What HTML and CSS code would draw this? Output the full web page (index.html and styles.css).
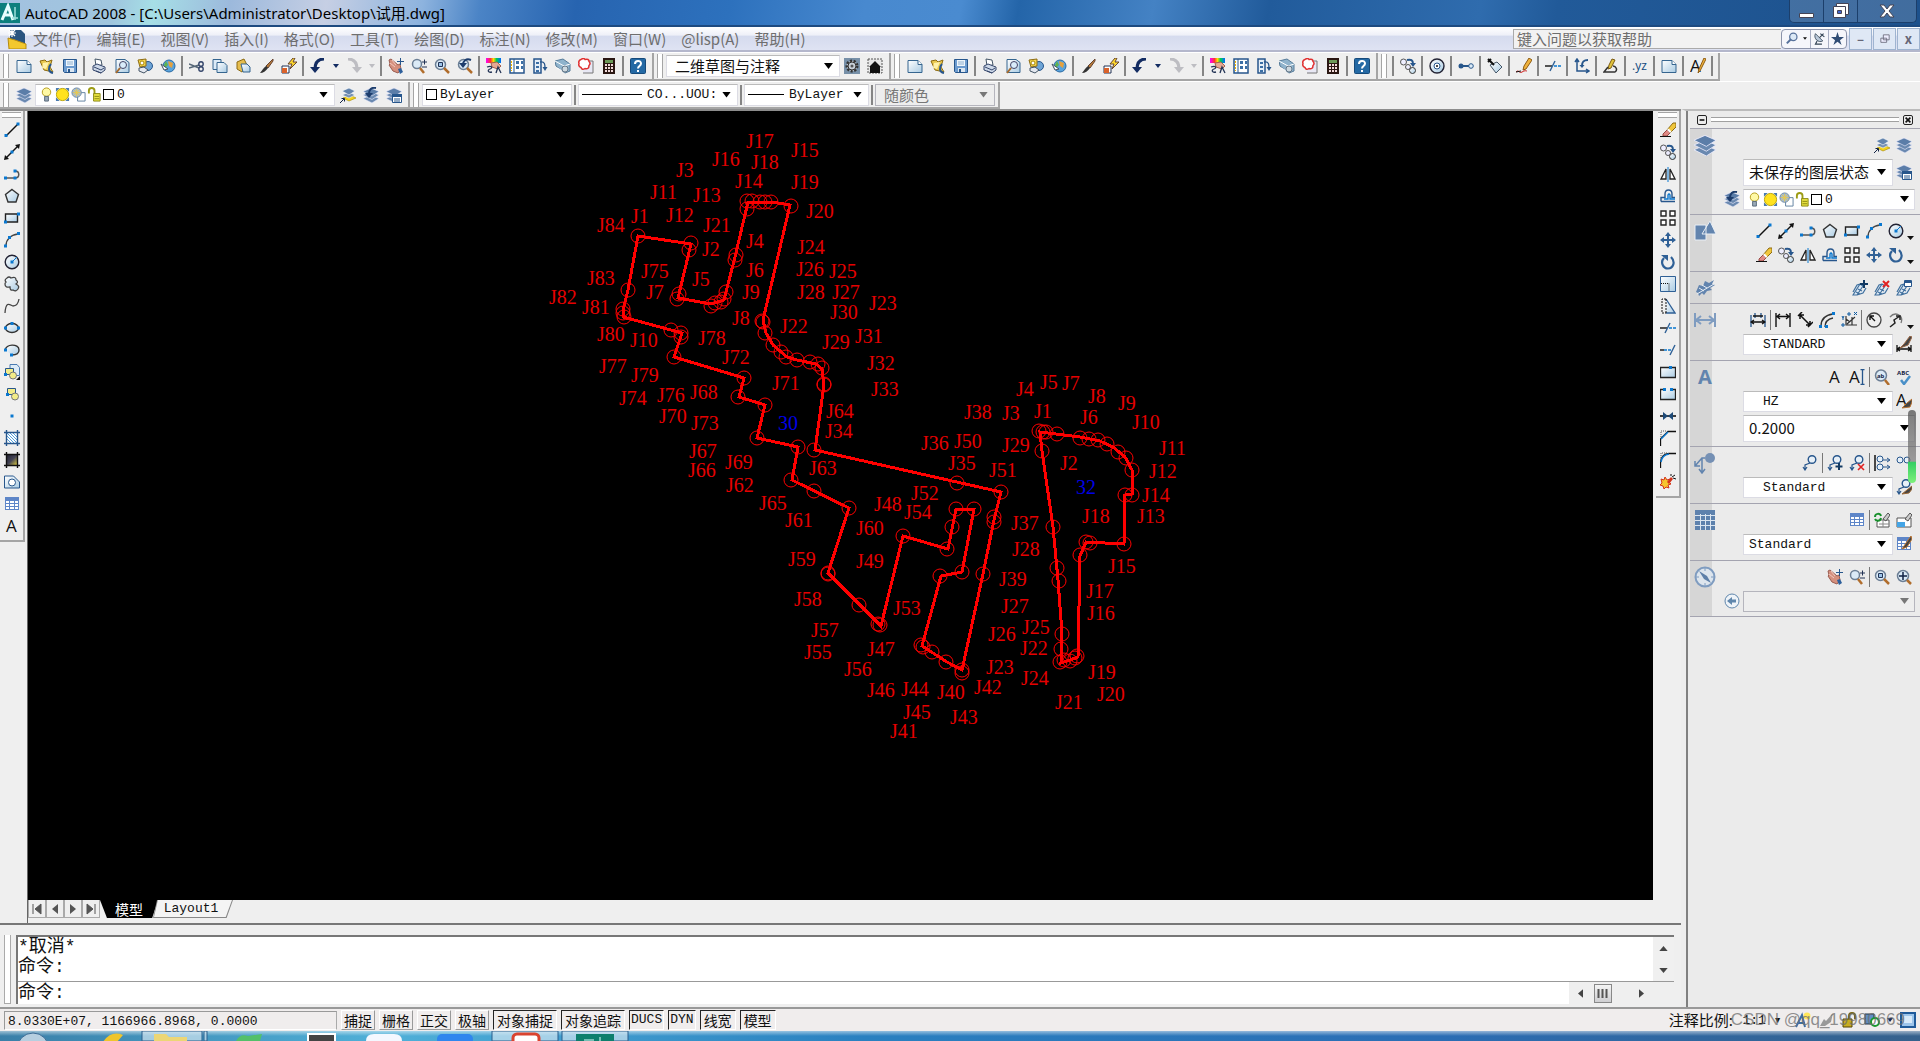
FILE: index.html
```html
<!DOCTYPE html>
<html lang="zh-CN">
<head>
<meta charset="utf-8">
<title>AutoCAD 2008</title>
<link rel="stylesheet" href="styles.css">
</head>
<body>
<svg class="sprite" aria-hidden="true">
<defs>
<linearGradient id="sheetFill" x1="0" y1="0" x2="1" y2="1"><stop offset="0" stop-color="#fff"/><stop offset="1" stop-color="#a9cbe3"/></linearGradient>
<linearGradient id="darkFill" x1="0" y1="0" x2="1" y2="1"><stop offset="0" stop-color="#223"/><stop offset=".5" stop-color="#445"/><stop offset="1" stop-color="#d8c840"/></linearGradient>
<linearGradient id="rainbow"><stop offset="0" stop-color="#f0f"/><stop offset=".3" stop-color="#f33"/><stop offset=".5" stop-color="#fd0"/><stop offset=".7" stop-color="#0c5"/><stop offset="1" stop-color="#06f"/></linearGradient>
</defs>
<symbol id="new" viewBox="0 0 16 16"><path d="M1 2.500h10l4 4v8H1z" fill="url(#sheetFill)" stroke="#35658f"/><path d="M11 2.500v4h4" fill="#fff" stroke="#35658f"/></symbol>
<symbol id="open" viewBox="0 0 16 16"><path d="M1 3l5-1 2 2 5-2-2 7 3 5-9-2z" fill="#e9c84e" stroke="#8d6b12"/><path d="M4 5l6-1-3 7-4-1z" fill="#fff1a8"/><path d="M14 15c-5-1-5-6-2-9" fill="none" stroke="#27568c" stroke-width="2"/></symbol>
<symbol id="save" viewBox="0 0 16 16"><path d="M1.500 1.500h13v13h-12l-1-1z" fill="#6c9bcf" stroke="#27568c"/><path d="M4 2h8v6H4z" fill="#eef5fb"/><path d="M5 10h7v4H5z" fill="#dbe6f1"/><path d="M6 11h2v3H6z" fill="#27568c"/><path d="M5 4h6M5 6h6" stroke="#8fb0d0"/></symbol>
<symbol id="print" viewBox="0 0 16 16"><path d="M4 1l6 1 1 5-6 1z" fill="#fff" stroke="#456"/><path d="M2 8l4-2 8 3v3l-4 3-8-3z" fill="#cdd8e8" stroke="#34456a"/><path d="M3 9l7 3 3-2M5 13l5 2" stroke="#34456a" fill="none"/></symbol>
<symbol id="preview" viewBox="0 0 16 16"><path d="M2 1.500h9l4 3v10H2z" fill="url(#sheetFill)" stroke="#35658f"/><circle cx="9" cy="7" r="3.500" fill="#d9ecfa" stroke="#446"/><path d="M6 10l-4 5" stroke="#a66a2c" stroke-width="2"/></symbol>
<symbol id="publish" viewBox="0 0 16 16"><circle cx="11" cy="8" r="4.500" fill="#6ea4d5" stroke="#27568c"/><path d="M1 2l8-1v7l-6 1z" fill="#f6d84f" stroke="#8d6b12"/><path d="M2 10l5-1 4 3-4 3-5-2z" fill="#e4e8f0" stroke="#456"/><circle cx="5" cy="5" r="2" fill="#fff" stroke="#a80"/></symbol>
<symbol id="web" viewBox="0 0 16 16"><circle cx="9" cy="8" r="6" fill="#59a3dc" stroke="#2b6ba5"/><path d="M8 3l5 2-1 5-3-2z" fill="#e5a13e"/><path d="M6 3l2 4-3 3-1-3z" fill="#5fb44e"/><path d="M1 6l7 5-4 1z" fill="#fff" stroke="#456"/></symbol>
<symbol id="cut" viewBox="0 0 16 16"><path d="M0 6l10 4M0 10l10-3" stroke="#567" stroke-width="1.500"/><circle cx="12" cy="6" r="2.200" fill="none" stroke="#34456a" stroke-width="1.400"/><circle cx="12" cy="11" r="2.200" fill="none" stroke="#34456a" stroke-width="1.400"/></symbol>
<symbol id="copy" viewBox="0 0 16 16"><path d="M1 1.500h8v10H1z" fill="#dcebf7" stroke="#35658f"/><path d="M5 4.500h7l3 3v7H5z" fill="url(#sheetFill)" stroke="#35658f"/></symbol>
<symbol id="paste" viewBox="0 0 16 16"><path d="M2 4l7-3 4 8-6 5-5-3z" fill="#e6bd4d" stroke="#8d6b12"/><path d="M6 6h6l3 3v5H8z" fill="url(#sheetFill)" stroke="#35658f"/></symbol>
<symbol id="brush" viewBox="0 0 16 16"><path d="M15 1L8 8l2 2 5-7z" fill="#b77b39" stroke="#643"/><path d="M8 8l2 2c-2 3-5 5-8 5 2-2 3-5 6-7z" fill="#333"/></symbol>
<symbol id="match" viewBox="0 0 16 16"><path d="M12 0L7 6h4l-2 5 7-7h-4l2-4z" fill="#ffd92e" stroke="#643"/><path d="M1 8h7v7H1z" fill="#fff" stroke="#235"/><path d="M1 10h5v5H1z" fill="#d9622b"/></symbol>
<symbol id="undo" viewBox="0 0 16 16"><path d="M14 1C7 1 5 5 5 11" fill="none" stroke="currentColor" stroke-width="3"/><path d="M0 9h10l-5 6z" fill="currentColor"/></symbol>
<symbol id="redo" viewBox="0 0 16 16"><path d="M2 1c7 0 9 4 9 10" fill="none" stroke="currentColor" stroke-width="3"/><path d="M6 9h10l-5 6z" fill="currentColor"/></symbol>
<symbol id="down" viewBox="0 0 6 4"><path d="M0 0h6L3 4z" fill="currentColor"/></symbol>
<symbol id="pan" viewBox="0 0 16 16"><path d="M1 2l2-1 7 6 2-1 1 5-3 4-5-2-4-6 1-1z" fill="#d5907e" stroke="#9a5c50"/><path d="M2 5l5 4M4 2l4 5" stroke="#f2c9be"/><path d="M10 11l3-1 2 4-3 2z" fill="#2d5f9b"/><path d="M12.500 0v7M9 3.500h7" stroke="#27568c"/></symbol>
<symbol id="zoomrt" viewBox="0 0 16 16"><circle cx="6" cy="6" r="4.500" fill="#dbeaf6" stroke="#6c7f95" stroke-width="1.500"/><path d="M9 10l4 5" stroke="#b06d2c" stroke-width="2.500"/><path d="M11 4h5M13.500 1.500v5M11 9h5" stroke="#235"/></symbol>
<symbol id="zoomwin" viewBox="0 0 16 16"><circle cx="6.500" cy="6.500" r="5" fill="#dbeaf6" stroke="#6c7f95" stroke-width="1.500"/><path d="M4.500 4.500h4v4h-4z" fill="#9bc3e8" stroke="#235"/><path d="M10 10l5 5" stroke="#b06d2c" stroke-width="2.500"/></symbol>
<symbol id="zoomprev" viewBox="0 0 16 16"><circle cx="6.500" cy="6.500" r="5" fill="#dbeaf6" stroke="#6c7f95" stroke-width="1.500"/><path d="M14 2C9 0 6 3 6 7" fill="none" stroke="#1d3d6d" stroke-width="2"/><path d="M2 5h8l-4 5z" fill="#1d3d6d"/><path d="M10 10l5 5" stroke="#b06d2c" stroke-width="2.500"/></symbol>
<symbol id="zoomall" viewBox="0 0 16 16"><circle cx="7" cy="7" r="5.500" fill="#dbeaf6" stroke="#6c7f95" stroke-width="1.500"/><path d="M7 3v8M3 7h8" stroke="#124" stroke-width="1.500"/><path d="M11 11l4 4" stroke="#b06d2c" stroke-width="2.500"/></symbol>
<symbol id="props" viewBox="0 0 16 16"><path d="M0 0h15v5H0z" fill="url(#rainbow)"/><path d="M5 5l6-1 4 4-3 3-6-2z" fill="#e8a994" stroke="#a06050"/><path d="M10 15l2-6 3 6M1 9c5-2 6 1 3 2s-2 4 2 3" fill="none" stroke="#235" stroke-width="1.300"/></symbol>
<symbol id="center" viewBox="0 0 16 16"><path d="M1 1h14v14H1z" fill="#fff" stroke="#27568c" stroke-width="1.500"/><path d="M5 1v14" stroke="#27568c"/><path d="M2.500 3v10" stroke="#f0b400" stroke-dasharray="2 1"/><path d="M7 3h3v3H7zM12 3h2v3h-2zM7 8h3v3H7zM12 8h2v3h-2z" fill="#3b6ea5"/></symbol>
<symbol id="palette" viewBox="0 0 16 16"><path d="M2 1h7v14H2z" fill="#e6eff8" stroke="#27568c" stroke-width="1.500"/><path d="M4 4h3v2H4zM4 8h3v2H4zM4 12h3v2H4z" fill="#3b6ea5"/><path d="M8 4c5-1 5 3 5 6" fill="none" stroke="#27568c" stroke-width="1.300"/><path d="M10.500 9h5L13 13z" fill="#27568c"/></symbol>
<symbol id="sheetset" viewBox="0 0 16 16"><path d="M0 3l8-2 7 5v7l-5 2-9-7z" fill="#8fb3cc" stroke="#567b98"/><path d="M0 3l9 5 6-2M2 10l8 4" stroke="#fff" fill="none"/><circle cx="10" cy="11" r="3" fill="#cdd9e0" stroke="#678"/></symbol>
<symbol id="markup" viewBox="0 0 16 16"><path d="M5 3h10v12H5" fill="#e8e8f4" stroke="#777"/><path d="M3 1.500q3-2 4 0 4-1 4 2 2 2 0 4 0 4-4 3-3 2-4-1-3-1-2-4-1-3 2-4z" fill="#fff" stroke="#e03030" stroke-width="1.500"/></symbol>
<symbol id="calc" viewBox="0 0 16 16"><path d="M2 0h12v16H2z" fill="#2a1712"/><path d="M4 2h8v3H4z" fill="#6c9a58"/><path d="M4 7h8M4 10h8M4 13h8" stroke="#f1dada" stroke-width="2" stroke-dasharray="2 1"/></symbol>
<symbol id="help" viewBox="0 0 16 16"><rect x=".5" y=".5" width="15" height="15" rx="1" fill="#2469a4" stroke="#174a7a"/><path d="M5 6c0-4 6-4 6-.500C11 8 8 8 8 10.500M8 12v2" stroke="#fff" stroke-width="2" fill="none"/></symbol>
<symbol id="gear" viewBox="0 0 16 16"><path d="M0 0h16v16H0z" fill="#7790a8"/><circle cx="8" cy="8" r="5" fill="#ddd" stroke="#333" stroke-width="3" stroke-dasharray="2 1.500"/><circle cx="8" cy="8" r="4" fill="#c8d0d8" stroke="#333"/><circle cx="8" cy="8" r="1.500" fill="#555"/></symbol>
<symbol id="house" viewBox="0 0 16 16"><path d="M1 1h14v14H1z" fill="#e6e6e6" stroke="#555" stroke-dasharray="2 1"/><path d="M8 3l6 6h-1v6H3V9H2z" fill="#111"/></symbol>
<symbol id="layers" viewBox="0 0 16 16"><path d="M0 11.500L8 8l8 3.500L9 16z" fill="#6a89b0" stroke="#eef" stroke-width=".6"/><path d="M0 8l8-3.500L16 8l-7 4.500z" fill="#6a89b0" stroke="#eef" stroke-width=".6"/><path d="M0 4.500L8 1l8 3.500L9 9z" fill="#5b7da8" stroke="#eef" stroke-width=".6"/></symbol>
<symbol id="layercur" viewBox="0 0 16 16"><path d="M3 11l7-3 6 3-7 3z" fill="#f3d21c" stroke="#a58a00" stroke-width=".6"/><path d="M2 8l7-3 6 3-6 3z" fill="#7590b4" stroke="#fff" stroke-width=".6"/><path d="M2 4l7-3 6 3-6 4z" fill="#6384ad" stroke="#fff" stroke-width=".6"/><path d="M0 16l4-4M1.500 11.500H4.500V14.500" stroke="#124" fill="none"/></symbol>
<symbol id="layerprev" viewBox="0 0 16 16"><use href="#layers"/><path d="M13 1C8 0 6 3 6 7" fill="none" stroke="#1d3d6d" stroke-width="2"/><path d="M2 6h8l-4 5z" fill="#1d3d6d"/></symbol>
<symbol id="layerstate" viewBox="0 0 16 16"><use href="#layers"/><path d="M6.500 7.500h9v8h-9z" fill="#fff" stroke="#27568c"/><path d="M6 7h10v3H6z" fill="#27568c"/><path d="M8 12h6M8 14h6" stroke="#27568c"/></symbol>
<symbol id="bulb" viewBox="0 0 16 16"><circle cx="8" cy="5.500" r="4.500" fill="#fff9a5" stroke="#b39a16"/><path d="M6 10h4v5H6z" fill="#9aa9b8" stroke="#567"/></symbol>
<symbol id="sun" viewBox="0 0 16 16"><path d="M1 1h4L1 5zM15 1v4l-4-4zM1 15v-4l4 4zM15 15h-4l4-4z" fill="#4a7ab0"/><circle cx="8" cy="8" r="6.500" fill="#ffe21f" stroke="#b6a000"/></symbol>
<symbol id="vpfreeze" viewBox="0 0 16 16"><path d="M7 6h8v9H7z" fill="#fff" stroke="#5f7f9f"/><circle cx="6" cy="6" r="5" fill="#a7bccf" stroke="#6f8ba8"/><path d="M6 2v8M2 6h8M3 3l6 6M9 3L3 9" stroke="#e9c94a"/></symbol>
<symbol id="lock" viewBox="0 0 16 16"><path d="M2 7V4q0-3 3-3t3 3v4" fill="none" stroke="#9c9b14" stroke-width="2"/><path d="M7 7h7v8H7z" fill="#e8e240" stroke="#8a8812"/><path d="M8 10h5M8 12.500h5" stroke="#8a8812"/></symbol>
<symbol id="line" viewBox="0 0 16 16"><path d="M2 14L14 2" stroke="#111" stroke-width="1.400"/><path d="M.5 12h3v3h-3zM12.500.5h3v3h-3z" fill="#0a78d0"/></symbol>
<symbol id="xline" viewBox="0 0 16 16"><path d="M2 14L14 2" stroke="#111" stroke-width="1.400"/><path d="M0 16l1-5 4 4zM16 0l-5 1 4 4z" fill="#111"/><path d="M6.500 6.500h3v3h-3z" fill="#0a78d0"/></symbol>
<symbol id="pline" viewBox="0 0 16 16"><path d="M2 12h9c5 0 5-7 0-7" fill="none" stroke="#555" stroke-width="1.500"/><path d="M0 10.500h3v3H0zM9.500 10.500h3v3h-3zM9.500 3.500h3v3h-3z" fill="#0a78d0"/></symbol>
<symbol id="polygon" viewBox="0 0 16 16"><path d="M8 1.500l6.500 5-2.500 7.500H4L1.500 6.500z" fill="url(#sheetFill)" stroke="#333" stroke-width="1.400"/></symbol>
<symbol id="rect" viewBox="0 0 16 16"><path d="M1.500 4h12v8h-12z" fill="url(#sheetFill)" stroke="#222" stroke-width="1.400"/><path d="M0 10.500h3v3H0zM13 2.500h3v3h-3z" fill="#0a78d0"/></symbol>
<symbol id="arc" viewBox="0 0 16 16"><path d="M2 14C2 8 6 3 14 2" fill="none" stroke="#444" stroke-width="1.400"/><path d="M0 12.500h3v3H0zM4 4h3v3H4zM13 0h3v3h-3z" fill="#0a78d0"/></symbol>
<symbol id="circle" viewBox="0 0 16 16"><circle cx="8" cy="8" r="6.800" fill="url(#sheetFill)" stroke="#223" stroke-width="1.400"/><path d="M8 8l5-5" stroke="#0a78d0"/><path d="M6.500 6.500h3v3h-3z" fill="#0a78d0"/></symbol>
<symbol id="cloud" viewBox="0 0 16 16"><path d="M3 2q2-2 4 0 5-2 5 2 3 2 0 4 4 2 2 5-2 3-5 1-3 1-3-3-5 1-5-3 0-1 1-2-2-2 1-4z" fill="url(#sheetFill)" stroke="#444" stroke-width="1.300"/></symbol>
<symbol id="spline" viewBox="0 0 16 16"><path d="M1 15C2 1 7 8 9 8s5-1 6-7" fill="none" stroke="#444" stroke-width="1.300"/></symbol>
<symbol id="ellipse" viewBox="0 0 16 16"><ellipse cx="8" cy="8" rx="6.500" ry="4.500" fill="url(#sheetFill)" stroke="#333" stroke-width="1.400"/><path d="M0 6.500h3v3H0zM13 6.500h3v3h-3zM6.500 2h3v3h-3z" fill="#0a78d0"/></symbol>
<symbol id="earc" viewBox="0 0 16 16"><path d="M1.500 8C1 2 15 1 15 8c0 4-4 5-7 5" fill="url(#sheetFill)" stroke="#333" stroke-width="1.400"/><path d="M0 6.500h3v3H0zM6 11.500h3v3H6z" fill="#0a78d0"/></symbol>
<symbol id="insert" viewBox="0 0 16 16"><path d="M6 .5h7l2.500 3v8H6z" fill="#dcebf7" stroke="#4a7ab0"/><path d="M1.500 4.500h8v6h-8z" fill="#f2ec88" stroke="#27568c"/><circle cx="9" cy="11.500" r="3.500" fill="#f2ec88" stroke="#777"/><path d="M0 9h3v3H0z" fill="#0a78d0"/><path d="M16 12v4h-4z" fill="#111"/></symbol>
<symbol id="block" viewBox="0 0 16 16"><path d="M3.500 2.500h8v6h-8z" fill="#f2ec88" stroke="#27568c"/><circle cx="11" cy="10.500" r="3.500" fill="#f2ec88" stroke="#777"/><path d="M2 7h3v3H2z" fill="#0a78d0"/></symbol>
<symbol id="point" viewBox="0 0 16 16"><path d="M6.500 6.500h3v3h-3z" fill="#0a78d0"/></symbol>
<symbol id="hatch" viewBox="0 0 16 16"><path d="M3 3h10v10H3z" fill="#fff"/><path d="M3 9l4 4M3 6l7 7M3 3l10 10M6 3l7 7M9 3l4 4" stroke="#0a78d0" stroke-width=".7"/><path d="M0 2.500h16M0 13.500h16M2.500 0v16M13.500 0v16" stroke="#27568c" stroke-width="1.400"/></symbol>
<symbol id="gradient" viewBox="0 0 16 16"><path d="M3 3h10v10H3z" fill="url(#darkFill)"/><path d="M0 2.500h16M0 13.500h16M2.500 0v16M13.500 0v16" stroke="#111" stroke-width="1.400"/></symbol>
<symbol id="region" viewBox="0 0 16 16"><path d="M.5 2h9l6 6v6H.5z" fill="url(#sheetFill)" stroke="#27568c"/><circle cx="8" cy="8.500" r="3.500" fill="#fff" stroke="#27568c"/></symbol>
<symbol id="table" viewBox="0 0 16 16"><path d="M1 1h14v13H1z" fill="#5e86c8"/><path d="M2 5h3v2H2zM6 5h4v2H6zM11 5h3v2h-3zM2 8h3v2H2zM6 8h4v2H6zM11 8h3v2h-3zM2 11h3v2H2zM6 11h4v2H6zM11 11h3v2h-3z" fill="#fff"/></symbol>
<symbol id="erase" viewBox="0 0 16 16"><path d="M7 8l6-7h3v4l-6 6z" fill="#f0c63c" stroke="#8d6b12"/><path d="M3 12l4-4 3 3-3 3H3z" fill="#e08a86" stroke="#9a4a46"/><path d="M7 8l3 3 1.500-1.500-3-3z" fill="#fff"/><path d="M0 14.500h11" stroke="#111"/></symbol>
<symbol id="copyobj" viewBox="0 0 16 16"><circle cx="3.500" cy="4" r="3" fill="#eef" stroke="#555"/><circle cx="8" cy="9" r="2.500" fill="#eef" stroke="#555"/><circle cx="12.500" cy="12.500" r="3" fill="url(#sheetFill)" stroke="#333"/><path d="M7 2c4-1 6 0 6 4" fill="none" stroke="#27568c" stroke-width="2"/><path d="M10 5h6l-3 4z" fill="#27568c"/></symbol>
<symbol id="mirror" viewBox="0 0 16 16"><path d="M6 3v10H1zM10 3v10h5z" fill="#fff" stroke="#222" stroke-width="1.300"/><path d="M8 1v15" stroke="#0a78d0"/></symbol>
<symbol id="offset" viewBox="0 0 16 16"><path d="M1 13.500h14M1 13.500v-4h4V6q0-4 3.500-4T12 6v3.500h3" fill="none" stroke="#27568c" stroke-width="1.400"/><path d="M4 11h4V7q1-2 2 0v4h5" fill="none" stroke="#0a78d0" stroke-width="1.400"/></symbol>
<symbol id="array" viewBox="0 0 16 16"><path d="M1 1h5v5H1zM10 1h5v5h-5zM1 10h5v5H1zM10 10h5v5h-5z" fill="#fff" stroke="#222" stroke-width="1.400"/></symbol>
<symbol id="move" viewBox="0 0 16 16"><path d="M8 2v12M2 8h12" stroke="#2f6096" stroke-width="2"/><path d="M8 0l3 4H5zM8 16l3-4H5zM0 8l4-3v6zM16 8l-4-3v6z" fill="#2f6096"/></symbol>
<symbol id="rotate" viewBox="0 0 16 16"><path d="M4 4C0 8 3 14.500 8 14.500S16 8 11 3" fill="none" stroke="#2f6096" stroke-width="2.200"/><path d="M1 1h7v6z" fill="#2f6096"/></symbol>
<symbol id="scale" viewBox="0 0 16 16"><path d="M.5.5h15v15H.5z" fill="url(#sheetFill)" stroke="#2f6096"/><path d="M1 7.500h8v8" fill="none" stroke="#111" stroke-dasharray="1 1"/></symbol>
<symbol id="stretch" viewBox="0 0 16 16"><path d="M6 1l9 14H6" fill="url(#sheetFill)" stroke="#2f6096" stroke-width="1.300"/><path d="M6 1H2v14h4M6 1v14" fill="none" stroke="#111" stroke-dasharray="2 1"/></symbol>
<symbol id="trim" viewBox="0 0 16 16"><path d="M0 8h7" stroke="#111" stroke-width="1.400"/><path d="M9 8h7" stroke="#0a78d0" stroke-width="1.400" stroke-dasharray="3 1"/><path d="M5 13l5-10" stroke="#2f6096" stroke-width="1.400"/></symbol>
<symbol id="extend" viewBox="0 0 16 16"><path d="M0 8h4" stroke="#111" stroke-width="1.400"/><path d="M4 8h8" stroke="#0a78d0" stroke-width="1.400" stroke-dasharray="3 1"/><path d="M10 13l5-10" stroke="#2f6096" stroke-width="1.400"/></symbol>
<symbol id="breakpt" viewBox="0 0 16 16"><path d="M.5 3.500h15v10H.5z" fill="url(#sheetFill)" stroke="#222" stroke-width="1.300"/><path d="M9 2h3v3H9z" fill="#0a78d0"/></symbol>
<symbol id="break" viewBox="0 0 16 16"><path d="M3 3.500H.5v10h15v-10H13" fill="url(#sheetFill)" stroke="#222" stroke-width="1.300"/><path d="M3 2h3v3H3zM10 2h3v3h-3z" fill="#0a78d0"/></symbol>
<symbol id="join" viewBox="0 0 16 16"><path d="M0 8h16" stroke="#111" stroke-width="1.600"/><path d="M3 4l5 4-5 4zM13 4L8 8l5 4z" fill="#1d4a78"/></symbol>
<symbol id="chamfer" viewBox="0 0 16 16"><path d="M.5 16V9L8 1.500h8" fill="none" stroke="#111" stroke-width="1.300"/><path d="M1 9l7-7" stroke="#0a78d0" stroke-width="1.500"/><path d="M1 7V1h6" fill="none" stroke="#555" stroke-dasharray="1 1"/></symbol>
<symbol id="fillet" viewBox="0 0 16 16"><path d="M.5 16V11Q1 2 9 1.500h7" fill="none" stroke="#111" stroke-width="1.300"/><path d="M1 10Q2 3 9 2" fill="none" stroke="#0a78d0" stroke-width="1.500"/><path d="M1 6V1h6" fill="none" stroke="#555" stroke-dasharray="1 1"/></symbol>
<symbol id="explode" viewBox="0 0 16 16"><path d="M1 5l3 1 1-3 2 3 3-1-1 3 2 2-3 1 1 3-3-1-2 2-1-3-3-1 2-2z" fill="#f6c52f" stroke="#d3331c"/><path d="M7 8l4-5 2 2-4 5z" fill="#d3331c"/><path d="M12 3l3-2M13 4l3 1M11 2V0" stroke="#111"/></symbol>
<symbol id="target" viewBox="0 0 16 16"><circle cx="8" cy="8" r="7" fill="url(#sheetFill)" stroke="#223" stroke-width="1.400"/><circle cx="8" cy="8" r="3" fill="#fff" stroke="#27568c"/><circle cx="8" cy="8" r="1" fill="#111"/></symbol>
<symbol id="link" viewBox="0 0 16 16"><path d="M3 8h9" stroke="#27568c" stroke-width="2"/><circle cx="3" cy="8" r="2.500" fill="#27568c"/><circle cx="13" cy="8" r="2.300" fill="#dcebf7" stroke="#27568c"/></symbol>
<symbol id="bucket" viewBox="0 0 16 16"><path d="M3 7l7-3 5 5-6 6z" fill="url(#sheetFill)" stroke="#456"/><path d="M1 1l6 6M1 4l3-3" stroke="#111" stroke-width="2"/></symbol>
<symbol id="pencil" viewBox="0 0 16 16"><path d="M13 0l3 2-6 9-3 1 1-4z" fill="#f0b23c" stroke="#8d5b12"/><path d="M0 14c3-3 3 2 6 0s4-1 5-1" fill="none" stroke="#c22"/><path d="M0 14l5-1" stroke="#111"/></symbol>
<symbol id="ucs" viewBox="0 0 16 16"><path d="M3 1v12h12M1 4l2-3 2 3M12 11l3 2-3 2" fill="none" stroke="#27568c" stroke-width="1.500"/><path d="M14 2C9 2 8 4 8 8" fill="none" stroke="#27568c" stroke-width="2"/><path d="M5.500 7h5L8 10z" fill="#27568c"/></symbol>
<symbol id="angle" viewBox="0 0 16 16"><path d="M9 1l3 1-4 8-3 1 1-4z" fill="#e0c33c" stroke="#7d5b12"/><path d="M5 9l-4 5h11c3-2 1-6-2-6" fill="none" stroke="#333" stroke-width="1.500"/></symbol>
<symbol id="dimq" viewBox="0 0 16 16"><path d="M1 3v12M15 3v12M5 1v5M11 1v5" stroke="#27568c" stroke-width="1.300"/><path d="M1 10h14M3 4h10M4 8l-3 2 3 2M12 8l3 2-3 2" fill="none" stroke="#111" stroke-width="1.300"/></symbol>
<symbol id="dimlin" viewBox="0 0 16 16"><path d="M1 1v14M15 1v14M1 4.500h14M5 2L2 4.500 5 7M11 2l3 2.500L11 7" fill="none" stroke="#111" stroke-width="1.400"/></symbol>
<symbol id="dimalign" viewBox="0 0 16 16"><path d="M1 4l4-4M11 15l5-5M3 3l10 10M3 7V3h4M9 13h4V9" fill="none" stroke="#111" stroke-width="1.500"/></symbol>
<symbol id="dimarc" viewBox="0 0 16 16"><path d="M2 14c0-7 5-11 12-12M6 15c0-5 3-8 8-9" fill="none" stroke="#333" stroke-width="1.400"/><path d="M0 13h3v3H0zM6 13h3v3H6zM13 0h3v3h-3z" fill="#0a78d0"/></symbol>
<symbol id="dimord" viewBox="0 0 16 16"><path d="M5 4v9h11M6 12l8-7M11 5v8M5 7l4 3" fill="none" stroke="#333" stroke-width="1.200"/><path d="M1 4l1 2 1-2M2 6v2M7 1h2v2H7zM13 0l3 3M16 0l-3 3M1 12h2v2H1z" fill="none" stroke="#0a58a0"/></symbol>
<symbol id="dimrad" viewBox="0 0 16 16"><circle cx="8" cy="8" r="7" fill="#eee" stroke="#444" stroke-width="1.300"/><path d="M9 9L4 4M4 8V4h4" fill="none" stroke="#111" stroke-width="1.400"/></symbol>
<symbol id="dimjog" viewBox="0 0 16 16"><path d="M2 5C7-1 16 3 13 11" fill="none" stroke="#777" stroke-width="1.300"/><path d="M2 15l5-4-1-3 6-4M8 4h4v4" fill="none" stroke="#222" stroke-width="1.500"/></symbol>
<symbol id="dimstyle" viewBox="0 0 16 16"><path d="M1 9v7M15 9v7M1 13h14M4 11l-3 2 3 2M12 11l3 2-3 2" stroke="#111" fill="none" stroke-width="1.300"/><path d="M14 0L8 8l-4 4 8-3 4-8z" fill="#444" stroke="#964"/></symbol>
<symbol id="reel" viewBox="0 0 16 16"><path d="M1 15l7-11 3 2-6 9zM5 15l6-2 3-5M8 4L5 5 1 12M6 9l4 2M4 12l4 2" fill="#dce8f4" stroke="#3f6f9d" stroke-width="1.200"/></symbol>
<symbol id="reeladd" viewBox="0 0 16 16"><use href="#reel"/><path d="M12 0v8M8 4h8" stroke="#123a63" stroke-width="2"/></symbol>
<symbol id="reeldel" viewBox="0 0 16 16"><use href="#reel"/><path d="M9 1l6 6M15 1L9 7" stroke="#e02222" stroke-width="2"/></symbol>
<symbol id="reelset" viewBox="0 0 16 16"><use href="#reel"/><path d="M8.500.5h7v6h-7z" fill="#fff" stroke="#27568c"/><path d="M8 2h8" stroke="#27568c" stroke-width="2"/></symbol>
<symbol id="leader" viewBox="0 0 16 16"><circle cx="10" cy="4.500" r="3.800" fill="#e7f0f8" stroke="#27568c" stroke-width="1.400"/><path d="M8 8l-5 2v5M1 12l2 3 2-3" fill="none" stroke="#27568c" stroke-width="1.200"/></symbol>
<symbol id="leaderadd" viewBox="0 0 16 16"><use href="#leader"/><path d="M12 8v7M8.500 11.500h7" stroke="#123a63" stroke-width="2"/></symbol>
<symbol id="leaderdel" viewBox="0 0 16 16"><use href="#leader"/><path d="M9 9l6 6M15 9l-6 6" stroke="#e02222" stroke-width="1.600"/></symbol>
<symbol id="leaderalign" viewBox="0 0 16 16"><path d="M1 0v16" stroke="#111" stroke-width="1.500"/><circle cx="6" cy="4" r="3" fill="#e7f0f8" stroke="#27568c"/><circle cx="6" cy="12" r="3" fill="#e7f0f8" stroke="#27568c"/><path d="M9 5h6M9 12h6M13 3l3 2-3 2M13 10l3 2-3 2" fill="none" stroke="#27568c"/></symbol>
<symbol id="leadercol" viewBox="0 0 16 16"><circle cx="4" cy="5" r="3" fill="#e7f0f8" stroke="#27568c"/><circle cx="11" cy="5" r="3" fill="#e7f0f8" stroke="#27568c"/><path d="M13 8v6" stroke="#27568c"/></symbol>
<symbol id="leaderstyle" viewBox="0 0 16 16"><use href="#leader"/><path d="M16 7l-5 4-5 4 7-1 3-4z" fill="#444" stroke="#963"/></symbol>
<symbol id="find" viewBox="0 0 16 16"><circle cx="7" cy="6.500" r="5.500" fill="#dbeaf6" stroke="#6c7f95" stroke-width="1.500"/><text x="3" y="9" class="glyph-s">ab</text><path d="M11 11l4 5" stroke="#b06d2c" stroke-width="2.500"/></symbol>
<symbol id="spell" viewBox="0 0 16 16"><text x="1" y="6" class="glyph-s">ABC</text><path d="M5 11l3 4 6-8" fill="none" stroke="#4a90c8" stroke-width="2.500"/></symbol>
<symbol id="bigA" viewBox="0 0 16 16"><text x="2" y="14" class="glyph">A</text></symbol>
<symbol id="aI" viewBox="0 0 16 16"><text x="0" y="14" class="glyph">A</text><path d="M13.500 1v14M11.500 .5h4M11.500 15.500h4" stroke="#27568c" stroke-width="1.300"/></symbol>
<symbol id="abrush" viewBox="0 0 16 16"><text x="0" y="13" class="glyph">A</text><path d="M16 6l-5 4-5 5 8-1 2-5z" fill="#444" stroke="#b87333"/></symbol>
<symbol id="apen" viewBox="0 0 16 16"><text x="0" y="14" class="glyph">A</text><path d="M14 0l2 1-6 12-2 2 1-4z" fill="#f0b23c" stroke="#8d5b12"/></symbol>
<symbol id="yz" viewBox="0 0 16 16"><text x="0" y="12" class="glyph-yz">.yz</text></symbol>
<symbol id="tablelink" viewBox="0 0 16 16"><path d="M5 8h10v7H3V10z" fill="#fff" stroke="#555"/><path d="M5 12h10M9 8v7" stroke="#888"/><path d="M9 7l5-6 2 2-4 6z" fill="#ccc" stroke="#555"/><path d="M1 5c0-4 5-4 6-1M7 6c-1 4-5 3-6 1" stroke="#18902c" fill="none" stroke-width="2"/></symbol>
<symbol id="tablelock" viewBox="0 0 16 16"><path d="M1 6h14v9H1z" fill="#fff" stroke="#555"/><path d="M1 10h8v5H1z" fill="#45a5e6"/><path d="M9 7l5-6 2 2-4 6z" fill="#ccc" stroke="#555"/></symbol>
<symbol id="tablestyle" viewBox="0 0 16 16"><use href="#table"/><path d="M15 0l-5 7-4 6 5-2 5-8z" fill="#444" stroke="#b87333"/></symbol>
<symbol id="satellite" viewBox="0 0 16 16"><path d="M3 2l9 9c-5 3-12-3-9-9z" fill="#b9c8da" stroke="#345"/><path d="M8 7l5-5M9 2l5 4M5 11l-2 4h8" fill="none" stroke="#345" stroke-width="1.400"/></symbol>
<symbol id="star" viewBox="0 0 16 16"><path d="M8 0l2 6h6l-5 4 2 6-5-4-5 4 2-6-5-4h6z" fill="#304d75"/></symbol>
<symbol id="search" viewBox="0 0 16 16"><circle cx="9" cy="6" r="4.500" fill="#dce9f6" stroke="#56719b" stroke-width="1.500"/><path d="M6 9l-5 5" stroke="#56719b" stroke-width="2.500"/></symbol>
<symbol id="dwg" viewBox="0 0 20 20"><path d="M3 1h11l4 4v9H3z" fill="#2a5580"/><path d="M1 9l7 2 11 4v5H2z" fill="#f3c82e" stroke="#b58a10"/><path d="M1 4h8M5 0v8M2 1l6 6M8 1L2 7" stroke="#fff" stroke-width="1.200"/></symbol>
<symbol id="back" viewBox="0 0 16 16"><circle cx="8" cy="8" r="7" fill="#eef3f8" stroke="#5f86ac"/><path d="M3 8l5-4v2.500h4v3H8V12z" fill="#5f86ac"/></symbol>
</svg>

<div class="window">
<header class="titlebar">
  <svg class="app-logo" viewBox="0 0 20 20"><path d="M0 0h20v20H0z" fill="#0d7f7d"/><path d="M2 17L8 3l5 14M4 12h7" fill="none" stroke="#e9ffff" stroke-width="3"/><path d="M15 4v13M12 15h6" stroke="#9fe0dc" stroke-width="1.500"/></svg>
  <h1>AutoCAD 2008 - [C:\Users\Administrator\Desktop\试用.dwg]</h1>
  <div class="caption">
    <button aria-label="最小化"><svg viewBox="0 0 18 18"><path d="M1.500 11.500h14v4h-14z" fill="#fff" stroke="#445"/></svg></button>
    <button aria-label="还原"><svg viewBox="0 0 18 18"><path d="M4.500 1.500h12v11h-12z" fill="#fff" stroke="#445"/><path d="M1.500 4.500h12v11h-12z" fill="#fff" stroke="#445"/><path d="M5.500 8.500h4v3h-4z" fill="#46c" stroke="#445"/></svg></button>
    <button class="wide" aria-label="关闭"><svg viewBox="0 0 18 18"><path d="M2 3h4l3 4 3-4h4l-5 6 5 6h-4l-3-4-3 4H2l5-6z" fill="#fff" stroke="#445"/></svg></button>
  </div>
</header>

<nav class="menubar">
  <svg class="doc-icon"><use href="#dwg"/></svg>
  <a href="#">文件(F)</a><a href="#">编辑(E)</a><a href="#">视图(V)</a><a href="#">插入(I)</a><a href="#">格式(O)</a><a href="#">工具(T)</a><a href="#">绘图(D)</a><a href="#">标注(N)</a><a href="#">修改(M)</a><a href="#">窗口(W)</a><a href="#">@lisp(A)</a><a href="#">帮助(H)</a>
  <input class="ask" type="text" placeholder="键入问题以获取帮助" aria-label="键入问题以获取帮助">
  <div class="info">
    <button aria-label="搜索"><svg><use href="#search"/></svg><svg class="dn"><use href="#down"/></svg></button>
    <button aria-label="通讯中心"><svg><use href="#satellite"/></svg></button>
    <button aria-label="收藏夹"><svg><use href="#star"/></svg></button>
  </div>
  <div class="mdi"><button aria-label="最小化图形">–</button><button aria-label="还原图形"><svg viewBox="0 0 12 12"><path d="M4 1h7v6H4zM1 5h7v5H1z" fill="#eef" stroke="#667"/></svg></button><button aria-label="关闭图形">x</button></div>
</nav>

<div class="toolrow standard">
  <div class="bar"><i class="grip"></i>
    <button class="t" aria-label="新建"><svg><use href="#new"/></svg></button><button class="t" aria-label="打开"><svg><use href="#open"/></svg></button><button class="t" aria-label="保存"><svg><use href="#save"/></svg></button><i class="sep"></i>
    <button class="t" aria-label="打印"><svg><use href="#print"/></svg></button><button class="t" aria-label="预览"><svg><use href="#preview"/></svg></button><button class="t" aria-label="发布"><svg><use href="#publish"/></svg></button><button class="t" aria-label="网络"><svg><use href="#web"/></svg></button><i class="sep"></i>
    <button class="t" aria-label="剪切"><svg><use href="#cut"/></svg></button><button class="t" aria-label="复制"><svg><use href="#copy"/></svg></button><button class="t" aria-label="粘贴"><svg><use href="#paste"/></svg></button><button class="t" aria-label="特性匹配"><svg><use href="#brush"/></svg></button><button class="t" aria-label="块编辑器"><svg><use href="#match"/></svg></button><i class="sep"></i>
    <button class="t undo" aria-label="放弃"><svg><use href="#undo"/></svg></button><button class="t drop undo" aria-label="放弃列表"><svg><use href="#down"/></svg></button><button class="t off" aria-label="重做"><svg><use href="#redo"/></svg></button><button class="t drop off" aria-label="重做列表"><svg><use href="#down"/></svg></button><i class="sep"></i>
    <button class="t" aria-label="平移"><svg><use href="#pan"/></svg></button><button class="t" aria-label="实时缩放"><svg><use href="#zoomrt"/></svg></button><button class="t" aria-label="窗口缩放"><svg><use href="#zoomwin"/></svg></button><button class="t" aria-label="缩放上一个"><svg><use href="#zoomprev"/></svg></button><i class="sep"></i>
    <button class="t" aria-label="特性"><svg><use href="#props"/></svg></button><button class="t" aria-label="设计中心"><svg><use href="#center"/></svg></button><button class="t" aria-label="工具选项板"><svg><use href="#palette"/></svg></button><button class="t" aria-label="图纸集"><svg><use href="#sheetset"/></svg></button><button class="t" aria-label="标记集"><svg><use href="#markup"/></svg></button><button class="t" aria-label="计算器"><svg><use href="#calc"/></svg></button><i class="sep"></i>
    <button class="t" aria-label="帮助"><svg><use href="#help"/></svg></button>
  </div>
  <div class="bar"><i class="grip"></i>
    <label class="combo workspace-combo"><select class="cjk" aria-label="工作空间"><option>二维草图与注释</option></select></label>
    <button class="t" aria-label="工作空间设置"><svg><use href="#gear"/></svg></button><button class="t" aria-label="我的工作空间"><svg><use href="#house"/></svg></button>
  </div>
  <div class="bar"><i class="grip"></i>
    <button class="t" aria-label="新建"><svg><use href="#new"/></svg></button><button class="t" aria-label="打开"><svg><use href="#open"/></svg></button><button class="t" aria-label="保存"><svg><use href="#save"/></svg></button><i class="sep"></i>
    <button class="t" aria-label="打印"><svg><use href="#print"/></svg></button><button class="t" aria-label="预览"><svg><use href="#preview"/></svg></button><button class="t" aria-label="发布"><svg><use href="#publish"/></svg></button><button class="t" aria-label="网络"><svg><use href="#web"/></svg></button><i class="sep"></i>
    <button class="t" aria-label="特性匹配"><svg><use href="#brush"/></svg></button><button class="t" aria-label="块编辑器"><svg><use href="#match"/></svg></button><i class="sep"></i>
    <button class="t undo" aria-label="放弃"><svg><use href="#undo"/></svg></button><button class="t drop undo" aria-label="放弃列表"><svg><use href="#down"/></svg></button><button class="t off" aria-label="重做"><svg><use href="#redo"/></svg></button><button class="t drop off" aria-label="重做列表"><svg><use href="#down"/></svg></button><i class="sep"></i>
    <button class="t" aria-label="特性"><svg><use href="#props"/></svg></button><button class="t" aria-label="设计中心"><svg><use href="#center"/></svg></button><button class="t" aria-label="工具选项板"><svg><use href="#palette"/></svg></button><button class="t" aria-label="图纸集"><svg><use href="#sheetset"/></svg></button><button class="t" aria-label="标记集"><svg><use href="#markup"/></svg></button><button class="t" aria-label="计算器"><svg><use href="#calc"/></svg></button><i class="sep"></i>
    <button class="t" aria-label="帮助"><svg><use href="#help"/></svg></button>
  </div>
  <div class="bar"><i class="grip"></i><i class="sep"></i>
    <button class="t" aria-label="复制对象"><svg><use href="#copyobj"/></svg></button><i class="sep"></i><button class="t" aria-label="圆环"><svg><use href="#target"/></svg></button><i class="sep"></i><button class="t" aria-label="连接"><svg><use href="#link"/></svg></button><i class="sep"></i><button class="t" aria-label="填充"><svg><use href="#bucket"/></svg></button><i class="sep"></i><button class="t" aria-label="编辑多段线"><svg><use href="#pencil"/></svg></button><i class="sep"></i><button class="t" aria-label="修剪"><svg><use href="#trim"/></svg></button><i class="sep"></i><button class="t" aria-label="坐标系"><svg><use href="#ucs"/></svg></button><i class="sep"></i><button class="t" aria-label="编辑"><svg><use href="#angle"/></svg></button><i class="sep"></i><button class="t" aria-label="点过滤"><svg><use href="#yz"/></svg></button><i class="sep"></i><button class="t" aria-label="图纸"><svg><use href="#new"/></svg></button><i class="sep"></i><button class="t" aria-label="编辑文字"><svg><use href="#apen"/></svg></button><i class="sep"></i>
  </div>
</div>

<div class="toolrow">
  <div class="bar"><i class="grip"></i>
    <button class="t" aria-label="图层特性"><svg><use href="#layers"/></svg></button>
    <label class="combo layer-combo"><svg><use href="#bulb"/></svg><svg><use href="#sun"/></svg><svg><use href="#vpfreeze"/></svg><svg><use href="#lock"/></svg><i class="swatch"></i><select aria-label="图层"><option>0</option></select></label>
    <button class="t" aria-label="置为当前"><svg><use href="#layercur"/></svg></button><button class="t" aria-label="上一个图层"><svg><use href="#layerprev"/></svg></button><button class="t" aria-label="图层状态"><svg><use href="#layerstate"/></svg></button>
  </div>
  <div class="bar"><i class="grip"></i>
    <label class="combo color-combo"><i class="swatch"></i><select aria-label="颜色"><option>ByLayer</option></select></label><i class="sep"></i>
    <label class="combo ltype-combo"><i class="rule"></i><select aria-label="线型"><option>CO...UOU:</option></select></label><i class="sep"></i>
    <label class="combo lweight-combo"><i class="rule"></i><select aria-label="线宽"><option>ByLayer</option></select></label><i class="sep"></i>
    <label class="combo plot-combo disabled"><select class="cjk" aria-label="打印样式" disabled><option>随颜色</option></select></label>
  </div>
</div>

<main class="main">
<div class="left">
  <div class="workspace">
    <div class="tools">
      <i class="hgrip"></i>
      <button class="t" aria-label="直线"><svg><use href="#line"/></svg></button><button class="t" aria-label="构造线"><svg><use href="#xline"/></svg></button><button class="t" aria-label="多段线"><svg><use href="#pline"/></svg></button><button class="t" aria-label="正多边形"><svg><use href="#polygon"/></svg></button><button class="t" aria-label="矩形"><svg><use href="#rect"/></svg></button><button class="t" aria-label="圆弧"><svg><use href="#arc"/></svg></button><button class="t" aria-label="圆"><svg><use href="#circle"/></svg></button><button class="t" aria-label="修订云线"><svg><use href="#cloud"/></svg></button><button class="t" aria-label="样条曲线"><svg><use href="#spline"/></svg></button><button class="t" aria-label="椭圆"><svg><use href="#ellipse"/></svg></button><button class="t" aria-label="椭圆弧"><svg><use href="#earc"/></svg></button><button class="t" aria-label="插入块"><svg><use href="#insert"/></svg></button><button class="t" aria-label="创建块"><svg><use href="#block"/></svg></button><button class="t" aria-label="点"><svg><use href="#point"/></svg></button><button class="t" aria-label="图案填充"><svg><use href="#hatch"/></svg></button><button class="t" aria-label="渐变色"><svg><use href="#gradient"/></svg></button><button class="t" aria-label="面域"><svg><use href="#region"/></svg></button><button class="t" aria-label="表格"><svg><use href="#table"/></svg></button><button class="t" aria-label="多行文字"><svg><use href="#bigA"/></svg></button>
    </div>
    <section class="document">
      <div class="canvas">
      <svg class="drawing" viewBox="28 111 1625 788" role="img" aria-label="宗地图">
        <g class="plot">
          <polygon points="638,236 691,244 678,298 711,304 724,300 735,257 748,202 772,202 790,205 763,320 766,333 773,345 787,357 797,360 816,364 822,369 824,385 815,450 1001,492 994,520 983,574 962,670 947,662 922,646 941,576 962,572 974,509 956,509 948,549 903,536 881,626 828,573 849,508 792,480 798,447 757,438 765,405 739,397 744,378 674,357 682,333 623,317 623,310 628,290"/>
          <polygon points="1040,432 1080,437 1100,441 1113,447 1125,457 1132,470 1132,494 1125,495 1124,544 1086,542 1080,556 1078,657 1070,660 1061,663 1062,633 1058,580 1053,527 1042,451"/>
        </g>
        <g class="nodes">
          <circle cx="638" cy="236" r="7"/><circle cx="691" cy="243" r="7"/><circle cx="689" cy="250" r="7"/><circle cx="679" cy="294" r="7"/><circle cx="677" cy="299" r="7"/><circle cx="711" cy="306" r="7"/><circle cx="715" cy="303" r="7"/><circle cx="721" cy="302" r="7"/><circle cx="724" cy="299" r="7"/><circle cx="726" cy="292" r="7"/><circle cx="735" cy="260" r="7"/><circle cx="736" cy="255" r="7"/><circle cx="747" cy="209" r="7"/><circle cx="747" cy="201" r="7"/><circle cx="752" cy="201" r="7"/><circle cx="760" cy="202" r="7"/><circle cx="765" cy="202" r="7"/><circle cx="771" cy="202" r="7"/><circle cx="791" cy="206" r="7"/><circle cx="762" cy="321" r="7"/><circle cx="763" cy="322" r="7"/><circle cx="765" cy="333" r="7"/><circle cx="773" cy="345" r="7"/><circle cx="781" cy="352" r="7"/><circle cx="786" cy="357" r="7"/><circle cx="797" cy="360" r="7"/><circle cx="810" cy="362" r="7"/><circle cx="818" cy="364" r="7"/><circle cx="822" cy="368" r="7"/><circle cx="824" cy="384" r="7"/><circle cx="824" cy="385" r="7"/><circle cx="744" cy="378" r="7"/><circle cx="738" cy="397" r="7"/><circle cx="765" cy="405" r="7"/><circle cx="757" cy="438" r="7"/><circle cx="798" cy="447" r="7"/><circle cx="628" cy="290" r="7"/><circle cx="623" cy="309" r="7"/><circle cx="623" cy="313" r="7"/><circle cx="624" cy="317" r="7"/><circle cx="671" cy="330" r="7"/><circle cx="681" cy="333" r="7"/><circle cx="681" cy="337" r="7"/><circle cx="674" cy="357" r="7"/>
          <circle cx="814" cy="450" r="7"/><circle cx="791" cy="480" r="7"/><circle cx="814" cy="491" r="7"/><circle cx="849" cy="508" r="7"/><circle cx="957" cy="483" r="7"/><circle cx="1001" cy="492" r="7"/><circle cx="994" cy="517" r="7"/><circle cx="994" cy="522" r="7"/><circle cx="983" cy="574" r="7"/><circle cx="962" cy="572" r="7"/><circle cx="940" cy="576" r="7"/><circle cx="956" cy="509" r="7"/><circle cx="974" cy="509" r="7"/><circle cx="952" cy="527" r="7"/><circle cx="947" cy="549" r="7"/><circle cx="903" cy="536" r="7"/><circle cx="828" cy="573" r="7"/><circle cx="828" cy="574" r="7"/><circle cx="859" cy="605" r="7"/><circle cx="878" cy="624" r="7"/><circle cx="880" cy="625" r="7"/><circle cx="921" cy="645" r="7"/><circle cx="923" cy="647" r="7"/><circle cx="932" cy="652" r="7"/><circle cx="946" cy="662" r="7"/><circle cx="962" cy="670" r="7"/><circle cx="962" cy="673" r="7"/>
          <circle cx="1039" cy="431" r="7"/><circle cx="1043" cy="432" r="7"/><circle cx="1046" cy="432" r="7"/><circle cx="1057" cy="434" r="7"/><circle cx="1080" cy="438" r="7"/><circle cx="1089" cy="439" r="7"/><circle cx="1098" cy="440" r="7"/><circle cx="1107" cy="444" r="7"/><circle cx="1118" cy="452" r="7"/><circle cx="1126" cy="458" r="7"/><circle cx="1132" cy="470" r="7"/><circle cx="1132" cy="495" r="7"/><circle cx="1125" cy="495" r="7"/><circle cx="1124" cy="544" r="7"/><circle cx="1086" cy="542" r="7"/><circle cx="1090" cy="543" r="7"/><circle cx="1080" cy="555" r="7"/><circle cx="1077" cy="656" r="7"/><circle cx="1075" cy="658" r="7"/><circle cx="1070" cy="661" r="7"/><circle cx="1064" cy="660" r="7"/><circle cx="1060" cy="662" r="7"/><circle cx="1061" cy="649" r="7"/><circle cx="1062" cy="634" r="7"/><circle cx="1059" cy="581" r="7"/><circle cx="1057" cy="568" r="7"/><circle cx="1053" cy="527" r="7"/><circle cx="1042" cy="451" r="7"/>
        </g>
        <g class="labels">
          <text x="746" y="148">J17</text><text x="791" y="157">J15</text><text x="712" y="166">J16</text><text x="751" y="169">J18</text><text x="676" y="177">J3</text><text x="735" y="188">J14</text><text x="791" y="189">J19</text><text x="650" y="199">J11</text><text x="693" y="202">J13</text><text x="806" y="218">J20</text><text x="631" y="223">J1</text><text x="666" y="222">J12</text><text x="597" y="232">J84</text><text x="703" y="232">J21</text><text x="702" y="256">J2</text><text x="746" y="248">J4</text><text x="797" y="254">J24</text><text x="796" y="276">J26</text><text x="829" y="278">J25</text><text x="641" y="278">J75</text><text x="692" y="286">J5</text><text x="746" y="277">J6</text><text x="587" y="285">J83</text><text x="646" y="299">J7</text><text x="742" y="299">J9</text><text x="797" y="299">J28</text><text x="832" y="299">J27</text><text x="549" y="304">J82</text><text x="582" y="314">J81</text><text x="869" y="310">J23</text><text x="830" y="319">J30</text><text x="732" y="325">J8</text><text x="780" y="333">J22</text><text x="855" y="343">J31</text><text x="597" y="341">J80</text><text x="630" y="347">J10</text><text x="698" y="345">J78</text><text x="822" y="349">J29</text><text x="722" y="364">J72</text><text x="867" y="370">J32</text><text x="599" y="373">J77</text><text x="631" y="382">J79</text><text x="772" y="390">J71</text><text x="871" y="396">J33</text><text x="619" y="405">J74</text><text x="657" y="402">J76</text><text x="690" y="399">J68</text><text x="659" y="423">J70</text><text x="691" y="430">J73</text><text x="826" y="418">J64</text><text x="825" y="438">J34</text>
          <text x="964" y="419">J38</text><text x="1002" y="420">J3</text><text x="921" y="450">J36</text><text x="954" y="448">J50</text><text x="1002" y="452">J29</text><text x="689" y="458">J67</text><text x="725" y="469">J69</text><text x="688" y="477">J66</text><text x="726" y="492">J62</text><text x="809" y="475">J63</text><text x="948" y="470">J35</text><text x="989" y="477">J51</text><text x="911" y="500">J52</text><text x="874" y="511">J48</text><text x="904" y="519">J54</text><text x="759" y="510">J65</text><text x="785" y="527">J61</text><text x="856" y="535">J60</text><text x="1011" y="530">J37</text><text x="1012" y="556">J28</text><text x="788" y="566">J59</text><text x="856" y="568">J49</text><text x="999" y="586">J39</text><text x="794" y="606">J58</text><text x="893" y="615">J53</text><text x="1001" y="613">J27</text><text x="988" y="641">J26</text><text x="811" y="637">J57</text><text x="804" y="659">J55</text><text x="867" y="656">J47</text><text x="844" y="676">J56</text><text x="986" y="674">J23</text><text x="974" y="694">J42</text><text x="867" y="697">J46</text><text x="901" y="696">J44</text><text x="937" y="699">J40</text><text x="903" y="719">J45</text><text x="950" y="724">J43</text><text x="890" y="738">J41</text>
          <text x="1040" y="389">J5</text><text x="1062" y="390">J7</text><text x="1016" y="396">J4</text><text x="1088" y="403">J8</text><text x="1118" y="410">J9</text><text x="1034" y="418">J1</text><text x="1080" y="424">J6</text><text x="1132" y="429">J10</text><text x="1159" y="455">J11</text><text x="1149" y="478">J12</text><text x="1060" y="470">J2</text><text x="1142" y="502">J14</text><text x="1137" y="523">J13</text><text x="1082" y="523">J18</text><text x="1108" y="573">J15</text><text x="1086" y="598">J17</text><text x="1087" y="620">J16</text><text x="1022" y="634">J25</text><text x="1020" y="655">J22</text><text x="1021" y="685">J24</text><text x="1088" y="679">J19</text><text x="1097" y="701">J20</text><text x="1055" y="709">J21</text>
          <text class="parcel" x="778" y="430">30</text><text class="parcel" x="1076" y="494">32</text>
        </g>
      </svg>
      </div>
      <div class="tabs">
        <button class="nav" aria-label="第一个"><svg viewBox="0 0 10 12"><path d="M1 1v10M9 1L3 6l6 5z" fill="#555" stroke="#555"/></svg></button><button class="nav" aria-label="上一个"><svg viewBox="0 0 10 12"><path d="M8 1L2 6l6 5z" fill="#555"/></svg></button><button class="nav" aria-label="下一个"><svg viewBox="0 0 10 12"><path d="M2 1l6 5-6 5z" fill="#555"/></svg></button><button class="nav" aria-label="最后一个"><svg viewBox="0 0 10 12"><path d="M9 1v10M1 1l6 5-6 5z" fill="#555" stroke="#555"/></svg></button>
        <button class="tab active">模型</button><button class="tab"><span>Layout1</span></button>
      </div>
    </section>
    <div class="tools modify">
      <i class="hgrip"></i>
      <button class="t" aria-label="删除"><svg><use href="#erase"/></svg></button><button class="t" aria-label="复制"><svg><use href="#copyobj"/></svg></button><button class="t" aria-label="镜像"><svg><use href="#mirror"/></svg></button><button class="t" aria-label="偏移"><svg><use href="#offset"/></svg></button><button class="t" aria-label="阵列"><svg><use href="#array"/></svg></button><button class="t" aria-label="移动"><svg><use href="#move"/></svg></button><button class="t" aria-label="旋转"><svg><use href="#rotate"/></svg></button><button class="t" aria-label="缩放"><svg><use href="#scale"/></svg></button><button class="t" aria-label="拉伸"><svg><use href="#stretch"/></svg></button><button class="t" aria-label="修剪"><svg><use href="#trim"/></svg></button><button class="t" aria-label="延伸"><svg><use href="#extend"/></svg></button><button class="t" aria-label="打断于点"><svg><use href="#breakpt"/></svg></button><button class="t" aria-label="打断"><svg><use href="#break"/></svg></button><button class="t" aria-label="合并"><svg><use href="#join"/></svg></button><button class="t" aria-label="倒角"><svg><use href="#chamfer"/></svg></button><button class="t" aria-label="圆角"><svg><use href="#fillet"/></svg></button><button class="t" aria-label="分解"><svg><use href="#explode"/></svg></button>
    </div>
  </div>
  <section class="command">
    <i class="vgrip"></i>
    <div class="console">
      <div class="history"><div class="log"><p>*取消*</p><p>命令:</p></div><div class="vscroll"><button aria-label="向上"><svg viewBox="0 0 10 6"><path d="M0 6l5-6 5 6z" fill="#444"/></svg></button><button aria-label="向下"><svg viewBox="0 0 10 6"><path d="M0 0h10L5 6z" fill="#444"/></svg></button></div></div>
      <div class="entry"><label for="cmd">命令:</label><input id="cmd" type="text"><div class="hscroll"><button aria-label="向左"><svg viewBox="0 0 6 10"><path d="M6 0v10L0 5z" fill="#444"/></svg></button><button class="thumb" aria-label="滚动条"><svg viewBox="0 0 12 9"><path d="M1.500 0v9M5.500 0v9M9.500 0v9" stroke="#555" stroke-width="2"/></svg></button><button aria-label="向右"><svg viewBox="0 0 6 10"><path d="M0 0v10l6-5z" fill="#444"/></svg></button></div></div>
    </div>
  </section>
</div>

<aside class="dash">
  <div class="dash-head"><button aria-label="折叠"><svg viewBox="0 0 10 10"><path d="M2 5h6" stroke="#111" stroke-width="2"/></svg></button><i></i><button aria-label="关闭"><svg viewBox="0 0 10 10"><path d="M2 2l6 6M8 2L2 8" stroke="#111" stroke-width="2"/></svg></button></div>
  <section class="panel"><svg class="badge"><use href="#layers"/></svg>
    <div class="row"><button class="t" aria-label="置为当前"><svg><use href="#layercur"/></svg></button><button class="t" aria-label="图层"><svg><use href="#layers"/></svg></button></div>
    <div class="row tall"><label class="combo mid"><select class="cjk large" aria-label="图层状态"><option>未保存的图层状态</option></select></label><button class="t" aria-label="状态管理"><svg><use href="#layerstate"/></svg></button></div>
    <div class="row"><button class="t" aria-label="上一个图层"><svg><use href="#layerprev"/></svg></button><label class="combo full"><svg><use href="#bulb"/></svg><svg><use href="#sun"/></svg><svg><use href="#vpfreeze"/></svg><svg><use href="#lock"/></svg><i class="swatch"></i><select aria-label="当前图层"><option>0</option></select></label></div>
  </section>
  <section class="panel"><svg class="badge" viewBox="0 0 22 22"><path d="M1 5h11v15H1zM8 14L16 1l6 13z" fill="#6284ae" stroke="#e8eef5"/></svg>
    <div class="row"><button class="t" aria-label="直线"><svg><use href="#line"/></svg></button><button class="t" aria-label="构造线"><svg><use href="#xline"/></svg></button><button class="t" aria-label="多段线"><svg><use href="#pline"/></svg></button><button class="t" aria-label="多边形"><svg><use href="#polygon"/></svg></button><button class="t" aria-label="矩形"><svg><use href="#rect"/></svg></button><button class="t" aria-label="圆弧"><svg><use href="#arc"/></svg></button><button class="t" aria-label="圆"><svg><use href="#circle"/></svg></button><i class="more"></i></div>
    <div class="row"><button class="t" aria-label="删除"><svg><use href="#erase"/></svg></button><button class="t" aria-label="复制"><svg><use href="#copyobj"/></svg></button><button class="t" aria-label="镜像"><svg><use href="#mirror"/></svg></button><button class="t" aria-label="偏移"><svg><use href="#offset"/></svg></button><button class="t" aria-label="阵列"><svg><use href="#array"/></svg></button><button class="t" aria-label="移动"><svg><use href="#move"/></svg></button><button class="t" aria-label="旋转"><svg><use href="#rotate"/></svg></button><i class="more"></i></div>
  </section>
  <section class="panel"><svg class="badge" viewBox="0 0 22 22"><path d="M2 15l3-7 4 1 2-5 4 2 5-3-2 4 3 1-5 3 2 2-5 1-3 4-2-2-3 3-1-3z" fill="#6284ae"/><path d="M3 17L20 7M8 8l5 3M5 11l5 3" stroke="#e8eef5"/></svg>
    <div class="row"><button class="t" aria-label="添加比例"><svg><use href="#reeladd"/></svg></button><button class="t" aria-label="删除比例"><svg><use href="#reeldel"/></svg></button><button class="t" aria-label="比例列表"><svg><use href="#reelset"/></svg></button></div>
  </section>
  <section class="panel"><svg class="badge" viewBox="0 0 22 22"><path d="M1 4v14M21 4v14M2 11h18M7 7l-5 4 5 4M15 7l5 4-5 4" fill="none" stroke="#7f9cc0" stroke-width="2"/></svg>
    <div class="row"><button class="t" aria-label="快速标注"><svg><use href="#dimq"/></svg></button><i class="psep"></i><button class="t" aria-label="线性"><svg><use href="#dimlin"/></svg></button><button class="t" aria-label="对齐"><svg><use href="#dimalign"/></svg></button><button class="t" aria-label="弧长"><svg><use href="#dimarc"/></svg></button><button class="t" aria-label="坐标"><svg><use href="#dimord"/></svg></button><i class="psep"></i><button class="t" aria-label="半径"><svg><use href="#dimrad"/></svg></button><button class="t" aria-label="折弯"><svg><use href="#dimjog"/></svg></button><i class="more"></i></div>
    <div class="row"><label class="combo mid indent"><select aria-label="标注样式"><option>STANDARD</option></select></label><button class="t" aria-label="标注样式管理"><svg><use href="#dimstyle"/></svg></button></div>
  </section>
  <section class="panel"><svg class="badge" viewBox="0 0 22 22"><text x="4" y="18" class="badge-a">A</text></svg>
    <div class="row"><button class="t" aria-label="多行文字"><svg><use href="#bigA"/></svg></button><button class="t" aria-label="单行文字"><svg><use href="#aI"/></svg></button><i class="psep"></i><button class="t" aria-label="查找"><svg><use href="#find"/></svg></button><button class="t" aria-label="拼写"><svg><use href="#spell"/></svg></button></div>
    <div class="row"><label class="combo mid indent"><select aria-label="文字样式"><option>HZ</option></select></label><button class="t" aria-label="文字样式管理"><svg><use href="#abrush"/></svg></button></div>
    <div class="row tall"><label class="combo full"><select class="cjk large" aria-label="文字高度"><option>0.2000</option></select></label></div>
    <i class="meter"></i>
  </section>
  <section class="panel"><svg class="badge" viewBox="0 0 22 22"><circle cx="16" cy="6" r="5" fill="#7590b4"/><path d="M11 6H8l-7 8M8 6v14M1 9v5h5M5 17l3 4 3-4" fill="none" stroke="#6284ae" stroke-width="1.500"/></svg>
    <div class="row"><button class="t" aria-label="多重引线"><svg><use href="#leader"/></svg></button><i class="psep"></i><button class="t" aria-label="添加引线"><svg><use href="#leaderadd"/></svg></button><button class="t" aria-label="删除引线"><svg><use href="#leaderdel"/></svg></button><i class="psep"></i><button class="t" aria-label="对齐引线"><svg><use href="#leaderalign"/></svg></button><button class="t" aria-label="合并引线"><svg><use href="#leadercol"/></svg></button></div>
    <div class="row"><label class="combo mid indent"><select aria-label="引线样式"><option>Standard</option></select></label><button class="t" aria-label="引线样式管理"><svg><use href="#leaderstyle"/></svg></button></div>
  </section>
  <section class="panel"><svg class="badge" viewBox="0 0 22 22"><path d="M1 1h20v20H1z" fill="#5d81ad"/><path d="M1 6.500h20M1 11.500h20M1 16.500h20M6.500 5v16M11.500 5v16M16.500 5v16" stroke="#dbe5f0"/></svg>
    <div class="row"><button class="t" aria-label="表格"><svg><use href="#table"/></svg></button><i class="psep"></i><button class="t" aria-label="数据链接"><svg><use href="#tablelink"/></svg></button><button class="t" aria-label="单元锁定"><svg><use href="#tablelock"/></svg></button></div>
    <div class="row"><label class="combo mid"><select aria-label="表格样式"><option>Standard</option></select></label><button class="t" aria-label="表格样式管理"><svg><use href="#tablestyle"/></svg></button></div>
  </section>
  <section class="panel last"><svg class="badge" viewBox="0 0 22 22"><circle cx="11" cy="11" r="9.500" fill="#dde5ed" stroke="#7f9cc0" stroke-width="2"/><path d="M5 5l8 5 4 7-7-4z" fill="#5d7fa8"/><path d="M11 2v3M11 17v3M2 11h3M17 11h3" stroke="#7f9cc0"/></svg>
    <div class="row"><button class="t" aria-label="平移"><svg><use href="#pan"/></svg></button><button class="t" aria-label="实时缩放"><svg><use href="#zoomrt"/></svg></button><i class="psep"></i><button class="t" aria-label="窗口缩放"><svg><use href="#zoomwin"/></svg></button><button class="t" aria-label="范围缩放"><svg><use href="#zoomall"/></svg></button></div>
    <div class="row"><button class="t" aria-label="后退"><svg><use href="#back"/></svg></button><label class="combo full disabled"><select aria-label="视图" disabled><option></option></select></label></div>
  </section>
</aside>
</main>

<footer class="status">
  <output class="coords">8.0330E+07, 1166966.8968, 0.0000</output>
  <div class="modes"><button>捕捉</button><button>栅格</button><button>正交</button><button>极轴</button><button class="on">对象捕捉</button><button class="on">对象追踪</button><button class="on latin">DUCS</button><button class="on latin">DYN</button><button class="on">线宽</button><button class="on">模型</button></div>
  <div class="annot"><span>注释比例:</span><button class="scale">1:1 ▾</button>
    <button class="t" aria-label="注释可见性"><svg viewBox="0 0 16 16"><path d="M1 15L7 3l3 12M3 11h7" fill="none" stroke="#3d6ea5" stroke-width="2"/><circle cx="12" cy="4" r="3.500" fill="#ffe65a"/></svg></button>
    <button class="t" aria-label="自动缩放"><svg viewBox="0 0 16 16"><path d="M2 14l4-7 2 2 7-8-2 9-6 4z" fill="#999"/></svg></button>
    <button class="t" aria-label="锁定"><svg viewBox="0 0 16 16"><path d="M2 7h9v8H2z" fill="#c8ac20" stroke="#554400"/><path d="M8 7V4q0-3 3-3t3 3v3" fill="none" stroke="#776611" stroke-width="2"/></svg></button>
    <button class="t" aria-label="更新"><svg viewBox="0 0 16 16"><path d="M1 2h9v10H1z" fill="#5f8fc4" stroke="#234"/><circle cx="11" cy="10" r="4" fill="#fff" stroke="#1a9a2c" stroke-width="2"/></svg></button>
    <button class="t drop undo" aria-label="状态栏菜单"><svg><use href="#down"/></svg></button>
    <button class="t" aria-label="全屏显示"><svg viewBox="0 0 16 16"><path d="M1 1h14v14H1z" fill="#9cc4ea" stroke="#1f5a9a" stroke-width="2"/><path d="M4 4h8v7H4z" fill="#d7e9f9"/></svg></button>
    <span class="watermark">CSDN @qq_19980669</span>
  </div>
</footer>
<div class="taskbar" aria-hidden="true">
  <svg viewBox="0 0 700 10"><path d="M142 0h60v10h-60zM204 0h3v10h-3zM492 0h66v10h-66zM562 0h66v10h-66z" fill="#dcebf5" fill-opacity=".65" stroke="#2b5f8c"/><circle cx="33" cy="18" r="16" fill="#b6cfe0" stroke="#3c6c95"/><path d="M103 11q8-12 20-7l-6 7" fill="#f0c52c"/><path d="M154 3h12l3 3h18v5h-33z" fill="#ecd675"/><path d="M236 10q4-8 12-5l14-2-2 7z" fill="#54c06a"/><path d="M308 3h27v8h-27z" fill="#444" stroke="#fff" stroke-width="2"/><path d="M366 10q0-7 8-7h20q8 0 8 7z" fill="#f4f8ff"/><rect x="437" y="3" width="36" height="12" rx="5" fill="#2f86ee"/><rect x="513" y="3" width="26" height="12" rx="4" fill="#fff" stroke="#d9432f" stroke-width="3"/><path d="M576 3h38v8h-38z" fill="#0d7f6d"/><path d="M584 9h10M600 6v4" stroke="#dff"/></svg>
</div>
</div>
</body>
</html>
```
FILE: styles.css
```css
* { box-sizing: border-box; }
body { margin: 0; background: #efefef; font-family: "Noto Sans CJK SC", sans-serif; font-size: 15px; color: #111; }
button { margin: 0; padding: 0; border: 0; background: none; font: inherit; color: inherit; }
i { font-style: normal; display: block; flex: none; }
.sprite { position: absolute; width: 0; height: 0; overflow: hidden; }
.window { min-height: 100vh; display: flex; flex-direction: column; }

/* title bar */
.titlebar { height: 27px; display: flex; align-items: center; gap: 5px; border-bottom: 2px solid #1d4a80; background: linear-gradient(100deg, #a3c1e0 0%, #9fc6de 6%, #a6dfe6 8%, #9cb9dc 12%, #c6cfe4 17%, #8db3de 22%, #4b84c6 25%, #2764b0 30%, #2d71bd 38%, #4889cf 45%, #4a8bd0 50%, #2465a9 53%, #4482c4 60%, #215b9b 66%, #2f6cae 77%, #215a99 81%, #1d518c 100%); }
.app-logo { width: 20px; height: 20px; flex: none; }
.titlebar h1 { margin: 0; font: 400 15px/24px "Noto Sans", "Noto Sans CJK SC", sans-serif; color: #000; white-space: nowrap; }
.caption { margin-left: auto; margin-right: 3px; align-self: flex-start; display: flex; border: 1px solid #1c3f6b; border-top: 0; border-radius: 0 0 5px 5px; background: rgba(255,255,255,.16); }
.caption button { width: 34px; height: 22px; border-right: 1px solid #1c3f6b; display: flex; align-items: center; justify-content: center; }
.caption .wide { width: 58px; border-right: 0; }
.caption svg { width: 18px; height: 18px; }

/* menu bar */
.menubar { height: 25px; display: flex; align-items: center; background: linear-gradient(#fff, #eef0f8 35%, #d5dbee 40%, #dfe3f3); border-bottom: 2px solid #b4b7cc; }
.doc-icon { width: 20px; height: 20px; margin: 0 6px 0 7px; flex: none; }
.menubar a { color: #6e6e6e; text-decoration: none; line-height: 22px; margin-right: 15px; white-space: nowrap; }
.ask { width: 268px; height: 20px; margin-left: auto; padding: 0 3px; border: 1px solid #aaa; border-right: 0; background: #f2f2f2; font: inherit; }
.ask::placeholder { color: #6e6e6e; opacity: 1; }
.info { display: flex; border: 1px solid #8b93aa; border-radius: 4px; background: #f5f6fb; height: 20px; }
.info button { width: 18px; display: flex; align-items: center; justify-content: center; gap: 4px; border-left: 1px solid #a9afc4; }
.info button:first-child { width: 28px; border-left: 0; }
.info svg { width: 13px; height: 13px; }
.info .dn { width: 4px; height: 3px; }
.mdi { display: flex; gap: 1px; margin-left: 2px; }
.mdi button { width: 23px; height: 22px; border: 1px solid #9fb4d0; background: #dfe8f5; color: #667; font-weight: 700; font-size: 13px; line-height: 20px; }
.mdi svg { width: 10px; height: 10px; }

/* toolbars */
.toolrow { height: 28px; display: flex; align-items: stretch; background: #efefef; border-top: 1px solid #fff; }
.standard { height: 29px; }
.bar { display: flex; align-items: center; padding: 0 3px; border-right: 2px solid #a5a5a5; border-bottom: 2px solid #a5a5a5; flex: none; }
.grip { width: 6px; height: 24px; margin-right: 3px; border: solid #a5a5a5; border-width: 0 1px; background: #fff; }
.sep { width: 2px; height: 20px; margin: 0 2px; background: #858585; }
.t { width: 23px; height: 22px; flex: none; display: flex; align-items: center; justify-content: center; }
.t svg { width: 16px; height: 16px; overflow: visible; }
.t.drop { width: 13px; }
.t.drop svg { width: 6px; height: 4px; }
.undo { color: #132c62; }
.off { color: #bdbdc2; }
.glyph { font: 17px "Open Sans", sans-serif; fill: #111; }
.glyph-s { font: 700 6px "Open Sans", sans-serif; fill: #124; }
.glyph-yz { font: 12px "Open Sans", sans-serif; fill: #124a80; }

/* drop-downs */
.combo { height: 22px; display: flex; align-items: center; gap: 1px; background: #fff; border: 1px solid #dcdce4; border-top-color: #bbb; padding: 0 6px 0 3px; flex: none; }
.combo::after { content: ""; flex: none; width: 9px; height: 6px; background: #000; clip-path: polygon(0 0, 100% 0, 50% 100%); }
.combo svg { width: 15px; height: 15px; flex: none; }
.combo select { appearance: none; flex: 1; min-width: 0; border: 0; padding: 0 2px; background: transparent; color: #111; font: 13px "Liberation Mono", "Noto Sans CJK SC", monospace; }
.combo select.cjk { font: 15px "Noto Sans CJK SC", sans-serif; line-height: 20px; }
.combo .swatch { width: 11px; height: 11px; border: 1px solid #000; }
.combo .rule { width: 36px; height: 1px; background: #000; margin-right: 2px; }
.combo.disabled { background: #eee; border-color: #b5b5bd; }
.combo.disabled::after { background: #777; }
.combo.disabled select { color: #777; opacity: 1; }
.workspace-combo { width: 174px; padding-left: 6px; }
.layer-combo { width: 300px; margin-right: 1px; }
.color-combo { width: 150px; }
.ltype-combo { width: 160px; }
.ltype-combo .rule { width: 60px; }
.lweight-combo { width: 125px; }
.plot-combo { width: 120px; padding-left: 6px; }

/* main area */
.main { flex: 1; display: flex; }
.left { flex: 1; min-width: 0; display: flex; flex-direction: column; border-top: 2px solid #8c8c8c; }
.workspace { flex: 1; display: flex; border-bottom: 2px solid #777; }
.tools { width: 25px; align-self: flex-start; display: flex; flex-direction: column; align-items: center; border-right: 2px solid #a5a5a5; border-bottom: 2px solid #a5a5a5; padding-bottom: 3px; }
.modify { margin-left: 3px; }
.hgrip { width: 19px; height: 6px; margin: 1px 0; border: solid #a5a5a5; border-width: 1px 0; background: #fff; }
.document { flex: 1; min-width: 0; margin-left: 2px; display: flex; flex-direction: column; border-left: 1px solid #666; }
.canvas { flex: 1; background: #000; display: flex; align-items: flex-start; }
.drawing { width: 100%; height: auto; }
.plot { fill: none; stroke: #f00; stroke-width: 3; shape-rendering: crispEdges; }
.nodes { fill: none; stroke: #f00; stroke-width: 1; }
.labels { font: 20px "Liberation Serif", serif; fill: #e60000; }
.parcel { fill: #0000e6; }
.tabs { height: 18px; margin-bottom: 5px; display: flex; }
.nav { width: 18px; border: 1px solid #aaa; border-top: 0; display: flex; align-items: center; justify-content: center; }
.nav svg { width: 10px; height: 12px; }
.tab { height: 18px; line-height: 17px; }
.tab.active { width: 58px; background: #000; color: #fff; font-size: 14px; clip-path: polygon(0 0, 100% 0, 90% 100%, 12% 100%); }
.tab:not(.active) { width: 80px; margin-left: -5px; padding: 0 1px 1px; background: #888; clip-path: polygon(5% 0, 100% 0, 92% 100%, 0 100%); }
.tab span { display: block; height: 17px; padding-right: 4px; background: #f4f4f4; font: 13px/17px "Liberation Mono", monospace; clip-path: polygon(5% 0, 100% 0, 92% 100%, 0 100%); }

/* command window */
.command { height: 82px; display: flex; padding: 10px 7px 3px 4px; gap: 5px; background: #efefef; }
.vgrip { width: 7px; border: solid #aaa; border-width: 0 1px 1px; background: #fff; }
.console { flex: 1; min-width: 0; border-left: 2px solid #777; border-top: 2px solid #777; font-family: "Liberation Mono", "Noto Sans CJK SC", monospace; font-size: 18px; display: flex; flex-direction: column; }
.history { height: 45px; display: flex; background: #fff; border-bottom: 1px solid #999; }
.log { flex: 1; }
.log p { margin: 0; line-height: 20px; }
.vscroll { width: 21px; background: #f0f0f0; display: flex; flex-direction: column; justify-content: space-around; align-items: center; line-height: 0; }
.vscroll svg { width: 9px; height: 5px; }
.entry { flex: 1; display: flex; margin-right: 21px; background: #fff; line-height: 22px; }
.entry input { flex: 1; min-width: 0; border: 0; padding: 0; background: none; font: inherit; }
.hscroll { width: 84px; background: #efefef; display: flex; align-items: center; justify-content: space-between; padding: 0 9px; line-height: 0; }
.hscroll svg { width: 5px; height: 9px; }
.hscroll .thumb { width: 18px; height: 19px; margin-right: 16px; border: 1px solid #888; background: linear-gradient(#f4f4f4, #cfcfd2); }
.hscroll .thumb svg { width: 12px; height: 9px; }

/* dashboard */
.dash { width: 239px; flex: none; padding-left: 4px; background: #ebebeb; border-top: 2px solid #bbb; border-left: 5px solid #ededed; box-shadow: inset 2px 0 0 #808080; }
.dash-head { height: 17px; display: flex; align-items: center; gap: 4px; padding: 0 7px; }
.dash-head i { flex: 1; height: 5px; border: solid #a0a0a0; border-width: 1px 0; background: #fff; }
.dash-head button { width: 10px; height: 10px; border: 1px solid #222; border-radius: 2px; line-height: 0; }
.dash-head svg { width: 8px; height: 8px; }
.panel { position: relative; min-height: 57px; border-top: 1px solid #a4a4b0; padding: 5px 5px 4px 0; display: flex; flex-direction: column; gap: 2px; background: linear-gradient(90deg, #d6d6d6 22px, #ebebeb 22px); }
.panel:nth-of-type(3) { min-height: 32px; }
.panel.last { border-bottom: 1px solid #a4a4b0; }
.badge { position: absolute; left: 4px; top: 5px; width: 22px; height: 22px; }
.badge-a { font: 700 20px "Open Sans", sans-serif; fill: #6284ae; }
.row { height: 22px; display: flex; justify-content: flex-end; align-items: center; }
.row.tall { height: 28px; }
.row .t { width: 22px; }
.row .combo { height: 21px; }
.row.tall .combo { height: 27px; }
.mid { width: 150px; }
.full { width: 172px; }
.row .full { padding-right: 5px; }
.indent select { padding-left: 16px; }
.psep { width: 1px; height: 20px; margin: 0 1px; background: #777; }
.more { width: 8px; height: 8px; margin-top: 14px; }
.more::after { content: ""; display: block; margin-top: 2px; width: 7px; height: 4px; background: #111; clip-path: polygon(0 0, 100% 0, 50% 100%); }
.meter { position: absolute; right: 4px; top: 49px; z-index: 2; width: 8px; height: 73px; border-radius: 4px; background: linear-gradient(rgba(70,70,70,.7), rgba(120,120,120,.7) 70%, #35cf63 72%, #7df07a); }

/* status bar */
.status { height: 24px; display: flex; align-items: center; border-top: 2px solid #999; background: #f0eded; }
.coords { width: 333px; height: 19px; margin-left: 4px; padding-left: 3px; border: 1px solid #999; border-right-color: #aaa; border-bottom-color: #fff; font: 13px/19px "Liberation Mono", monospace; white-space: nowrap; }
.modes { display: flex; align-items: center; gap: 4px; margin-left: 4px; }
.modes button { height: 20px; width: 34px; border: 1px solid #fff; border-right-color: #999; border-bottom-color: #999; font-size: 14px; line-height: 18px; white-space: nowrap; }
.modes .on { width: auto; padding: 0 3px; border-color: #222 #fff #fff #222; }
.modes .latin { font: 13px/18px "Liberation Mono", monospace; padding: 0 1px; }
.annot { position: relative; margin-left: auto; margin-right: 1px; display: flex; align-items: center; font-size: 15px; line-height: 20px; }
.annot .scale { font: 13px "Liberation Mono", monospace; width: 58px; }
.watermark { position: absolute; right: 14px; top: 1px; color: rgba(110,110,110,.75); font: 17px/20px "Liberation Sans", sans-serif; white-space: nowrap; }
.taskbar { height: 10px; overflow: hidden; background: linear-gradient(rgba(255,255,255,.5), rgba(255,255,255,0) 50%), linear-gradient(90deg, #3a7fa8, #4fb0d8 20%, #2a80c0 45%, #2b6db4 75%, #36618c); }
.taskbar svg { width: 700px; height: 10px; display: block; }
```
